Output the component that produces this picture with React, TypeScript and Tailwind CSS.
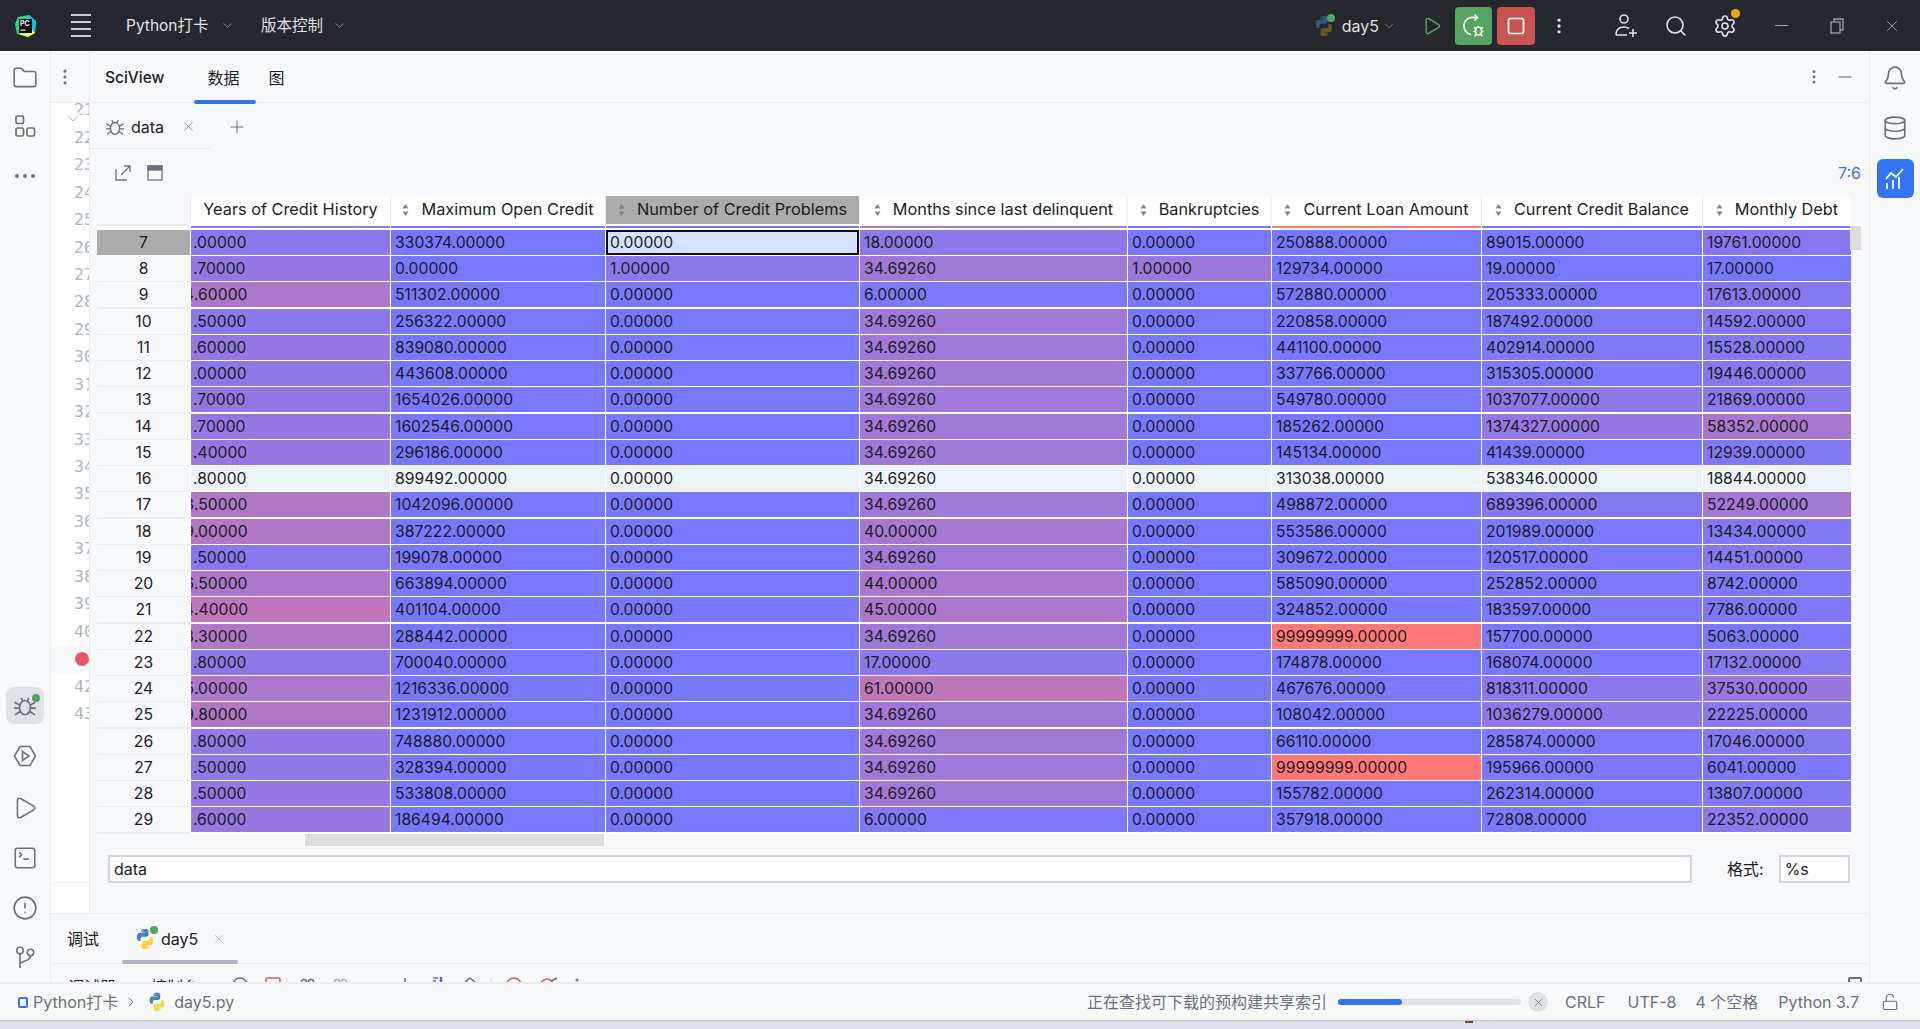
/**
 * PyCharm SciView data panel: title bar, tool stripes, gutter, heatmap table, debug tabs, status bar.
 */
import {
  Bell,
  ChevronDown,
  ChevronRight,
  CircleAlert,
  Database,
  Folder,
  LockOpen,
  Minus,
  MoreVertical,
  Play,
  Plus,
  Search,
  Settings,
  Square,
  SquareTerminal,
  X,
} from "lucide-react";

const GREY = "#6c707e";
const LN = "#aeb3c2";

// blue to red ramp that the data viewer uses for its colored mode
const heat = (t: number) =>
  `rgb(${Math.round(120 + 135 * t)},120,${Math.round(255 - 135 * t)})`;

type Row = {
  n: number;
  lead: string;
  yrs: string;
  yt: number;
  open: string;
  prob: string;
  mon: string;
  bk: string;
  loan: string;
  bal: string;
  debt: string;
};

const r = (
  n: number,
  lead: string,
  yrs: string,
  yt: number,
  open: string,
  prob: string,
  mon: string,
  bk: string,
  loan: string,
  bal: string,
  debt: string,
): Row => ({ n, lead, yrs, yt, open, prob, mon, bk, loan, bal, debt });

const M = "34.69260";
const Z = "0.00000";
const rows: Row[] = [
  r(7, "", ".00000", 0.13, "330374", Z, "18.00000", Z, "250888", "89015", "19761"),
  r(8, "", ".70000", 0.2, "0", "1.00000", M, "1.00000", "129734", "19", "17"),
  r(9, "4", ".60000", 0.39, "511302", Z, "6.00000", Z, "572880", "205333", "17613"),
  r(10, "", ".50000", 0.13, "256322", Z, M, Z, "220858", "187492", "14592"),
  r(11, "", ".60000", 0.2, "839080", Z, M, Z, "441100", "402914", "15528"),
  r(12, "", ".00000", 0.16, "443608", Z, M, Z, "337766", "315305", "19446"),
  r(13, "", ".70000", 0.2, "1654026", Z, M, Z, "549780", "1037077", "21869"),
  r(14, "", ".70000", 0.2, "1602546", Z, M, Z, "185262", "1374327", "58352"),
  r(15, "", ".40000", 0.22, "296186", Z, M, Z, "145134", "41439", "12939"),
  r(16, "", ".80000", 0, "899492", Z, M, Z, "313038", "538346", "18844"),
  r(17, "3", ".50000", 0.42, "1042096", Z, M, Z, "498872", "689396", "52249"),
  r(18, "9", ".00000", 0.43, "387222", Z, "40.00000", Z, "553586", "201989", "13434"),
  r(19, "", ".50000", 0.12, "199078", Z, M, Z, "309672", "120517", "14451"),
  r(20, "6", ".50000", 0.39, "663894", Z, "44.00000", Z, "585090", "252852", "8742"),
  r(21, "4", ".40000", 0.52, "401104", Z, "45.00000", Z, "324852", "183597", "7786"),
  r(22, "3", ".30000", 0.42, "288442", Z, M, Z, "99999999", "157700", "5063"),
  r(23, "", ".80000", 0.16, "700040", Z, "17.00000", Z, "174878", "168074", "17132"),
  r(24, "5", ".00000", 0.38, "1216336", Z, "61.00000", Z, "467676", "818311", "37530"),
  r(25, "9", ".80000", 0.44, "1231912", Z, M, Z, "108042", "1036279", "22225"),
  r(26, "", ".80000", 0.18, "748880", Z, M, Z, "66110", "285874", "17046"),
  r(27, "", ".50000", 0.17, "328394", Z, M, Z, "99999999", "195966", "6041"),
  r(28, "", ".50000", 0.21, "533808", Z, M, Z, "155782", "262314", "13807"),
  r(29, "", ".60000", 0.23, "186494", Z, "6.00000", Z, "357918", "72808", "22352"),
];

const money = (s: string) => `${s}.00000`;
const num = (s: string) => parseFloat(s);

function SortIcon() {
  return (
    <svg width="7" height="14" viewBox="0 0 7 14" className="shrink-0">
      <path d="M3.5 1 6.5 5.5H.5z M3.5 13 .5 8.5h6z" fill="#818594" />
    </svg>
  );
}

function PythonIcon({ size = 20, dim = false }: { size?: number; dim?: boolean }) {
  const d =
    "M11.9 2C8 2 8.2 3.7 8.2 3.7v1.8h3.8V6H6.5S4 5.7 4 9.9s2.2 4 2.2 4h1.3v-2s-.1-2.2 2.2-2.2h3.7s2.1 0 2.1-2V4.1S15.9 2 11.9 2zM9.8 3.2a.7.7 0 1 1 0 1.4.7.7 0 0 1 0-1.4z";
  return (
    <svg width={size} height={size} viewBox="0 0 24 24" className="shrink-0">
      <path d={d} fill={dim ? "#2f5a7e" : "#4584b6"} />
      <path d={d} fill={dim ? "#6b5a1c" : "#ffd43b"} transform="rotate(180 12 12)" />
    </svg>
  );
}

function PyCharmLogo() {
  return (
    <svg width="21" height="22" viewBox="0 0 21 22">
      <path d="M3 2 14 0l7 6-1 12-7 4-11-3L0 9z" fill="#21d789" />
      <path d="M14 0l7 6-1 12-7-4z" fill="#07c3f2" />
      <path d="M20 18l-7 4-9-3 10-8z" fill="#fcf84a" />
      <rect x="4" y="4" width="13" height="14" fill="#000" />
      <text x="5" y="11" fontSize="7" fontWeight="700" fill="#fff" fontFamily="Inter, sans-serif">
        PC
      </text>
      <rect x="5.5" y="14.5" width="5" height="1.2" fill="#fff" />
    </svg>
  );
}

function StructureIcon() {
  return (
    <svg width="24" height="24" viewBox="0 0 24 24" fill="none" stroke={GREY} strokeWidth="1.7">
      <rect x="3" y="2" width="7.500" height="7.500" rx="1.500" />
      <rect x="3" y="14" width="7.500" height="8" rx="1.500" />
      <rect x="14" y="14" width="7.500" height="8" rx="1.500" />
    </svg>
  );
}

function BugIcon({ size = 22, color = GREY }: { size?: number; color?: string }) {
  return (
    <svg width={size} height={size} viewBox="0 0 22 22" fill="none" stroke={color} strokeWidth="1.5">
      <ellipse cx="11" cy="12.5" rx="5" ry="6.5" />
      <path d="M7.5 3.5 9 6.5M14.5 3.5 13 6.5M1.5 7.5l4.5 2.5M20.5 7.5 16 10M1 13h5M21 13h-5M2 19l4.5-3M20 19l-4.5-3" />
    </svg>
  );
}

function ServicesIcon() {
  return (
    <svg width="24" height="24" viewBox="0 0 24 24" fill="none" stroke={GREY} strokeWidth="1.6">
      <path d="M7 2.5h10L22.5 12 17 21.5H7L1.5 12z" />
      <path d="M9.5 7.5 16 12l-6.5 4.5z" />
    </svg>
  );
}

function GitIcon() {
  return (
    <svg width="24" height="24" viewBox="0 0 24 24" fill="none" stroke={GREY} strokeWidth="1.6">
      <circle cx="7" cy="5.5" r="3.2" />
      <circle cx="17.5" cy="7.5" r="3.2" />
      <path d="M7 9v14M7 19c0-3 10.5-2 10.5-8.5" />
    </svg>
  );
}

function UserAddIcon() {
  return (
    <svg width="24" height="26" viewBox="0 0 24 26" fill="none" stroke="#dfe1e5" strokeWidth="1.6">
      <circle cx="10" cy="6" r="4" />
      <path d="M2 22c0-5 3-8 8-8 2 0 3.500.5 5 1.500M2 22h11M19 16v8M15 20h8" />
    </svg>
  );
}

function RestoreIcon() {
  return (
    <svg width="14" height="16" viewBox="0 0 14 16" fill="none" stroke="#9da0a8" strokeWidth="1.3">
      <rect x="1" y="4" width="9" height="11" />
      <path d="M4 4V1h9v11h-3" />
    </svg>
  );
}

function RerunDebugIcon() {
  return (
    <svg width="24" height="24" viewBox="0 0 24 24" fill="none" stroke="#fff" strokeWidth="1.6">
      <path d="M9 20.500A8.500 8.500 0 0 1 12 3.500h3M12.500.5l3 3-3 3" />
      <ellipse cx="16.500" cy="17" rx="3" ry="4" />
      <path d="M12 13.500l2.500 1.500M21 13.500 18.500 15M11.500 17.500h2M21.500 17.500h-2M12.500 22l2-1.500M20.500 22l-2-1.500" />
    </svg>
  );
}

function ChartIcon() {
  return (
    <svg width="22" height="24" viewBox="0 0 22 24" fill="none" stroke="#fff" strokeWidth="1.7">
      <path d="M2 12l5-6 5 4 7-8M3 22v-6M9 22v-9M15 22V10" />
    </svg>
  );
}

const COLS = [
  { title: "Years of Credit History", cls: "w-[199px]", sort: false },
  { title: "Maximum Open Credit", cls: "w-[214px]", sort: true },
  { title: "Number of Credit Problems", cls: "w-[253px]", sort: true },
  { title: "Months since last delinquent", cls: "w-[267px]", sort: true },
  { title: "Bankruptcies", cls: "w-[143px]", sort: true },
  { title: "Current Loan Amount", cls: "w-[209px]", sort: true },
  { title: "Current Credit Balance", cls: "w-[220px]", sort: true },
  { title: "Monthly Debt", cls: "w-[148px]", sort: true },
];

// colors of the row that is scrolled almost out of sight above row 7
const SLIVER = [0.3, 0, 0, 0.52, 0, 1, 0, 0];

function Cell({ cls, text, t, selected }: { cls: string; text: string; t: number; selected: boolean }) {
  return (
    <div
      className={`${cls} mr-px h-[25px] shrink-0 overflow-hidden whitespace-nowrap pl-[4px] leading-[26px]`}
      style={{ backgroundColor: selected ? "#edf3fc" : heat(t) }}
    >
      {text}
    </div>
  );
}

function DataTable() {
  return (
    <div className="w-[1753px] shrink-0 font-['Inter',sans-serif] text-[15.7px] text-[#1c1c24]">
      <div className="flex h-[28px] bg-[#ebecf0] text-[16.3px]">
        <div className="mr-px w-[93px] shrink-0 bg-[#f7f8fa]" />
        {COLS.map((c, i) => (
          <div
            key={c.title}
            className={`${c.cls} mr-px flex shrink-0 items-center justify-center gap-[12px] whitespace-nowrap pb-[1px] ${
              i === 2 ? "bg-[#ababab]" : "bg-white"
            }`}
          >
            {c.sort && <SortIcon />}
            <span>{c.title}</span>
          </div>
        ))}
      </div>
      <div className="flex h-[6px] bg-white">
        <div className="mr-px h-[2px] w-[93px] shrink-0 bg-[#ebecf0]" />
        {COLS.map((c, i) => (
          <div key={c.title} className={`${c.cls} mr-px mt-[2px] h-[2px] shrink-0`} style={{ backgroundColor: heat(SLIVER[i]) }} />
        ))}
      </div>
      {rows.map((row) => {
        const sel = row.n === 16;
        const tall = row.n % 4 === 1;
        const y = row.n === 7;
        return (
          <div key={row.n} className={`flex bg-white ${tall ? "h-[27px]" : "h-[26px]"}`}>
            <div
              className={`mr-px w-[93px] shrink-0 text-center leading-[26px] ${
                y ? "h-[25px] bg-[#ababab]" : `bg-[#f7f8fa] border-b-[#ebecf0] ${tall ? "border-b-2" : "border-b"}`
              }`}
            >
              {row.n}
            </div>
            <div
              className={`mr-px h-[25px] w-[199px] shrink-0 overflow-hidden whitespace-nowrap leading-[26px] ${
                row.lead ? "pl-[3px]" : "pl-[2px]"
              }`}
              style={{ backgroundColor: sel ? "#edf3fc" : heat(row.yt) }}
            >
              <span className="-ml-[12px] inline-block w-[12px] text-right">{row.lead}</span>
              {row.yrs}
            </div>
            <Cell cls="w-[214px]" text={money(row.open)} t={num(row.open) / 4e8} selected={sel} />
            {y ? (
              <div className="mr-px h-[25px] w-[253px] shrink-0 border-2 border-[#111111] bg-[#d4e2ff] pl-[2px] leading-[22px]">
                {row.prob}
              </div>
            ) : (
              <Cell cls="w-[253px]" text={row.prob} t={num(row.prob) / 7} selected={sel} />
            )}
            <Cell cls="w-[267px]" text={row.mon} t={num(row.mon) / 118} selected={sel} />
            <Cell cls="w-[143px]" text={row.bk} t={num(row.bk) / 4} selected={sel} />
            <Cell cls="w-[209px]" text={money(row.loan)} t={num(row.loan) / 99999999} selected={sel} />
            <Cell cls="w-[220px]" text={money(row.bal)} t={num(row.bal) / 6506797} selected={sel} />
            <Cell cls="w-[148px]" text={money(row.debt)} t={num(row.debt) / 165000} selected={sel} />
          </div>
        );
      })}
    </div>
  );
}

function TitleBar() {
  return (
    <div className="flex h-[51px] shrink-0 items-center bg-[#27282e] text-[15.5px] text-[#dfe1e5]">
      <div className="ml-[15px] flex w-[21px]">
        <PyCharmLogo />
      </div>
      <div className="ml-[35px] flex w-[20px] flex-col gap-[5px]">
        <div className="h-[2px] bg-[#c9ccd4]" />
        <div className="h-[2px] bg-[#c9ccd4]" />
        <div className="h-[2px] bg-[#c9ccd4]" />
        <div className="h-[2px] bg-[#c9ccd4]" />
      </div>
      <span className="ml-[35px] w-[94px] whitespace-nowrap">Python打卡</span>
      <ChevronDown size={15} strokeWidth={1.4} color="#868a91" />
      <span className="ml-[26px] w-[71px] whitespace-nowrap">版本控制</span>
      <ChevronDown size={15} strokeWidth={1.4} color="#868a91" />
      <div className="flex-1" />
      <div className="relative flex w-[28px]">
        <PythonIcon size={24} dim />
        <span className="absolute right-[5px] top-0 h-[8px] w-[8px] rounded-full bg-[#57a362]" />
      </div>
      <span className="ml-[2px] text-[16px]">day5</span>
      <ChevronDown size={14} strokeWidth={1.4} color="#868a91" className="ml-[3px]" />
      <Play size={20} strokeWidth={1.7} color="#57a362" className="ml-[26px]" />
      <div className="ml-[13px] flex h-[38px] w-[37px] items-center justify-center rounded-[4px] bg-[#57a362]">
        <RerunDebugIcon />
      </div>
      <div className="ml-[5px] flex h-[38px] w-[38px] items-center justify-center rounded-[4px] bg-[#c75450]">
        <Square size={20} strokeWidth={2} color="#fff" />
      </div>
      <MoreVertical size={20} strokeWidth={2} color="#dfe1e5" className="ml-[14px]" />
      <div className="ml-[45px] flex w-[24px]">
        <UserAddIcon />
      </div>
      <Search size={24} strokeWidth={1.6} color="#dfe1e5" className="ml-[26px]" />
      <div className="relative ml-[25px] flex w-[24px]">
        <Settings size={24} strokeWidth={1.6} color="#dfe1e5" />
        <span className="absolute -top-[5px] right-[-3px] h-[9px] w-[9px] rounded-full bg-[#f2a60d]" />
      </div>
      <div className="ml-[38px] h-px w-[13px] bg-[#9da0a8]" />
      <div className="ml-[42px] flex">
        <RestoreIcon />
      </div>
      <X size={18} strokeWidth={1.3} color="#9da0a8" className="ml-[39px] mr-[19px]" />
    </div>
  );
}

function LeftStripe() {
  return (
    <div className="flex w-[51px] shrink-0 flex-col items-center border-r border-[#ebecf0] bg-[#f7f8fa]">
      <Folder size={26} strokeWidth={1.5} color={GREY} className="mt-[14px]" />
      <div className="mt-[23px] flex">
        <StructureIcon />
      </div>
      <div className="mt-[36px] flex gap-[4px]">
        <div className="h-[4px] w-[4px] rounded-full bg-[#6c707e]" />
        <div className="h-[4px] w-[4px] rounded-full bg-[#6c707e]" />
        <div className="h-[4px] w-[4px] rounded-full bg-[#6c707e]" />
      </div>
      <div className="flex-1" />
      <div className="relative flex h-[37px] w-[38px] items-center justify-center rounded-[8px] bg-[#dfe1e5]">
        <BugIcon size={24} />
        <span className="absolute right-[4px] top-[7px] h-[8px] w-[8px] rounded-full bg-[#57a362]" />
      </div>
      <div className="mt-[20px] flex">
        <ServicesIcon />
      </div>
      <Play size={26} strokeWidth={1.5} color={GREY} className="mt-[27px]" />
      <SquareTerminal size={26} strokeWidth={1.5} color={GREY} className="mt-[24px]" />
      <CircleAlert size={26} strokeWidth={1.5} color={GREY} className="mt-[24px]" />
      <div className="mb-[13px] mt-[24px] flex">
        <GitIcon />
      </div>
    </div>
  );
}

function Gutter() {
  const lines = Array.from({ length: 23 }, (_, i) => 21 + i);
  return (
    <div className="relative flex w-[39px] shrink-0 flex-col border-r border-[#ebecf0] bg-white">
      <div className="flex h-[52px] shrink-0 items-center border-b border-[#ebecf0] bg-[#f7f8fa] pl-[4px]">
        <MoreVertical size={20} strokeWidth={1.8} color="#6c707e" />
      </div>
      <div className="h-[779px] shrink-0 overflow-hidden">
        <div className="-mt-[6px] font-['DejaVu_Sans_Mono',monospace] text-[16.5px] text-[#aeb3c2]">
          {lines.map((n) => (
            <div
              key={n}
              className={`flex h-[27.45px] items-center overflow-hidden whitespace-nowrap ${
                n === 41 ? "bg-[#f5f8fe] pl-[24px]" : "pl-[23px]"
              }`}
            >
              {n === 41 ? <span className="h-[14px] w-[14px] shrink-0 rounded-full bg-[#e55765]" /> : n}
            </div>
          ))}
        </div>
      </div>
      <div className="flex-1 rounded-t-[3px] border-t border-[#ebecf0] bg-white" />
      <div className="absolute left-[14px] top-[60px] flex rounded-full bg-white">
        <ChevronDown size={16} strokeWidth={1.5} color={LN} />
      </div>
    </div>
  );
}

function SciViewPanel() {
  return (
    <div className="flex min-w-0 flex-1 flex-col font-['Inter','Noto_Sans_CJK_SC',sans-serif] text-[16px] text-[#1c1c24]">
      <div className="flex h-[52px] shrink-0 items-center border-b border-[#ebecf0] pl-[15px] pr-[14px]">
        <span className="pt-[3px] text-[15.5px] font-medium">SciView</span>
        <div className="relative ml-[30px] flex h-full w-[62px] items-center justify-center pr-[4px] pt-[3px]">
          数据
          <span className="absolute -bottom-[2px] left-0 h-[4px] w-[62px] rounded-[2px] bg-[#3574f0]" />
        </div>
        <span className="ml-[12px] pt-[3px]">图</span>
        <div className="flex-1" />
        <MoreVertical size={18} strokeWidth={1.8} color={GREY} />
        <Minus size={20} strokeWidth={1.6} color="#8b8f99" className="ml-[12px]" />
      </div>
      <div className="flex h-[46px] shrink-0">
        <div className="flex w-[121px] items-center border-b border-[#ebecf0] pl-[15px] pt-[2px]">
          <BugIcon size={20} />
          <span className="ml-[6px]">data</span>
          <X size={15} strokeWidth={1.3} color="#818594" className="ml-[17px]" />
        </div>
        <Plus size={20} strokeWidth={1.2} color={GREY} className="ml-[16px] mt-[14px]" />
      </div>
      <div className="flex h-[47px] shrink-0 items-center pl-[25px] pr-[8px] pt-[1px]">
        <svg width="16" height="16" viewBox="0 0 16 16" fill="none" stroke={GREY} strokeWidth="1.3">
          <path d="M1 4v11h11M6 10l9-9M9 1h6v6" />
        </svg>
        <svg width="16" height="16" viewBox="0 0 16 16" fill="none" stroke={GREY} strokeWidth="1.3" className="ml-[16px]">
          <rect x="1" y="1" width="14" height="14" />
          <rect x="1" y="1" width="14" height="4" fill={GREY} />
        </svg>
        <div className="flex-1" />
        <span className="text-[#3574f0]">7:6</span>
      </div>
      <div className="flex shrink-0 pl-[7px]">
        <DataTable />
        <div className="mt-[30px] h-[24px] w-[11px] shrink-0 border-b border-r border-[#d9dae0] bg-[#dcdcdc]" />
      </div>
      <div className="ml-[215px] h-[12px] w-[299px] shrink-0 border border-t-0 border-[#d9dae0] bg-[#dcdcdc]" />
      <div className="mt-[8px] flex h-[29px] shrink-0 items-center pl-[18px]">
        <div className="flex h-[28px] w-[1584px] items-center border-2 border-[#d3d5db] bg-white pl-[4px]">data</div>
        <span className="ml-[35px]">格式:</span>
        <div className="ml-[15px] flex h-[28px] w-[71px] items-center border-2 border-[#d3d5db] bg-white pl-[4px]">%s</div>
      </div>
      <div className="flex-1" />
    </div>
  );
}

function DebugPanel() {
  return (
    <div className="flex h-[69px] shrink-0 flex-col border-t border-[#ebecf0] font-['Inter','Noto_Sans_CJK_SC',sans-serif] text-[16px] text-[#1c1c24]">
      <div className="flex h-[50px] shrink-0 items-center border-b border-[#ebecf0] pl-[16px]">
        <span>调试</span>
        <div className="relative ml-[23px] flex h-full w-[116px] items-center pl-[11px]">
          <div className="relative flex">
            <PythonIcon size={24} />
            <span className="absolute -top-[1px] right-[-1px] h-[8px] w-[8px] rounded-full bg-[#57a362]" />
          </div>
          <span className="ml-[4px]">day5</span>
          <X size={14} strokeWidth={1.3} color="#a8adbd" className="ml-[14px]" />
          <span className="absolute -bottom-px left-0 h-[4px] w-[116px] rounded-[2px] bg-[#aeb3c2]" />
        </div>
      </div>
      <div className="flex h-[18px] items-start overflow-hidden pl-[17px] pt-[13px]">
        <span className="whitespace-nowrap leading-[20px]">调试器</span>
        <span className="ml-[35px] whitespace-nowrap leading-[20px]">控制台</span>
        <svg width="540" height="20" viewBox="0 0 540 20" fill="none" strokeWidth="1.6" className="ml-[34px] shrink-0">
          <circle cx="7" cy="8" r="7" stroke={GREY} />
          <rect x="33" y="1" width="14" height="14" rx="2" stroke="#e55765" />
          <path d="M54 -5v25" stroke="#d3d5db" strokeWidth="1" />
          <circle cx="71" cy="5" r="2.5" stroke={GREY} />
          <circle cx="78" cy="5" r="2.5" stroke={GREY} />
          <circle cx="104" cy="5" r="2.5" stroke="#aeb3c2" />
          <circle cx="111" cy="5" r="2.500" stroke="#aeb3c2" />
          <path d="M140 6v8M147 6v8M172 1v10" stroke={GREY} />
          <path d="M200 1h5M200 4h3" stroke={GREY} />
          <path d="M208 0v10" stroke="#3574f0" strokeWidth="2.500" />
          <path d="M232 5l5-4 5 4" stroke={GREY} />
          <path d="M258 -5v25" stroke="#d3d5db" strokeWidth="1" />
          <circle cx="281" cy="8" r="7" stroke="#e55765" />
          <circle cx="314" cy="8" r="6" stroke="#e55765" />
          <path d="M318 4l6-3" stroke={GREY} />
          <circle cx="344" cy="3" r="1.500" fill={GREY} stroke="none" />
        </svg>
        <div className="flex-1" />
        <div className="mr-[7px] h-[14px] w-[14px] shrink-0 rounded-[2px] border-2 border-[#6c707e]" />
      </div>
    </div>
  );
}

function RightStripe() {
  return (
    <div className="flex w-[51px] shrink-0 flex-col items-center border-l border-[#ebecf0] bg-[#f7f8fa]">
      <Bell size={26} strokeWidth={1.5} color={GREY} className="mt-[14px]" />
      <Database size={26} strokeWidth={1.5} color={GREY} className="mt-[24px]" />
      <div className="mt-[18px] flex h-[39px] w-[37px] items-center justify-center rounded-[6px] bg-[#3574f0]">
        <ChartIcon />
      </div>
    </div>
  );
}

function StatusBar() {
  return (
    <div className="flex h-[38px] shrink-0 items-center border-t-2 border-[#ebecf0] bg-[#f7f8fa] font-['Inter','Noto_Sans_CJK_SC',sans-serif] text-[16px] text-[#6c707e]">
      <span className="ml-[18px] h-[11px] w-[10px] rounded-[2px] border-2 border-[#3574f0]" />
      <span className="ml-[5px] whitespace-nowrap">Python打卡</span>
      <ChevronRight size={16} strokeWidth={1.5} color={GREY} className="ml-[5px]" />
      <div className="ml-[7px] flex">
        <PythonIcon size={22} />
      </div>
      <span className="ml-[6px]">day5.py</span>
      <div className="flex-1" />
      <span className="whitespace-nowrap">正在查找可下载的预构建共享索引</span>
      <div className="ml-[11px] h-[6px] w-[183px] rounded-[3px] bg-[#dfe1e5]">
        <div className="h-[6px] w-[64px] rounded-[3px] bg-[#3574f0]" />
      </div>
      <div className="ml-[7px] flex h-[20px] w-[20px] items-center justify-center rounded-full bg-[#dfe1e5]">
        <X size={13} strokeWidth={1.5} color={GREY} />
      </div>
      <span className="ml-[17px]">CRLF</span>
      <span className="ml-[22px]">UTF-8</span>
      <span className="ml-[19px] whitespace-nowrap">4 个空格</span>
      <span className="ml-[20px] whitespace-nowrap">Python 3.7</span>
      <LockOpen size={18} strokeWidth={1.5} color={GREY} className="ml-[22px] mr-[21px]" />
    </div>
  );
}

export default function App() {
  return (
    <div className="flex h-[1029px] w-[1920px] flex-col overflow-hidden bg-[#f7f8fa] font-['Inter','Noto_Sans_CJK_SC',sans-serif]">
      <TitleBar />
      <div className="flex min-h-0 flex-1">
        <LeftStripe />
        <div className="flex min-w-0 flex-1 flex-col">
          <div className="flex min-h-0 flex-1">
            <Gutter />
            <SciViewPanel />
          </div>
          <DebugPanel />
        </div>
        <RightStripe />
      </div>
      <StatusBar />
      <div className="h-[9px] shrink-0 border-t border-[#c4c6cf] bg-[#dcdeea]">
        <div className="ml-[1465px] h-[2px] w-[8px] bg-[#b3261e]" />
      </div>
    </div>
  );
}
